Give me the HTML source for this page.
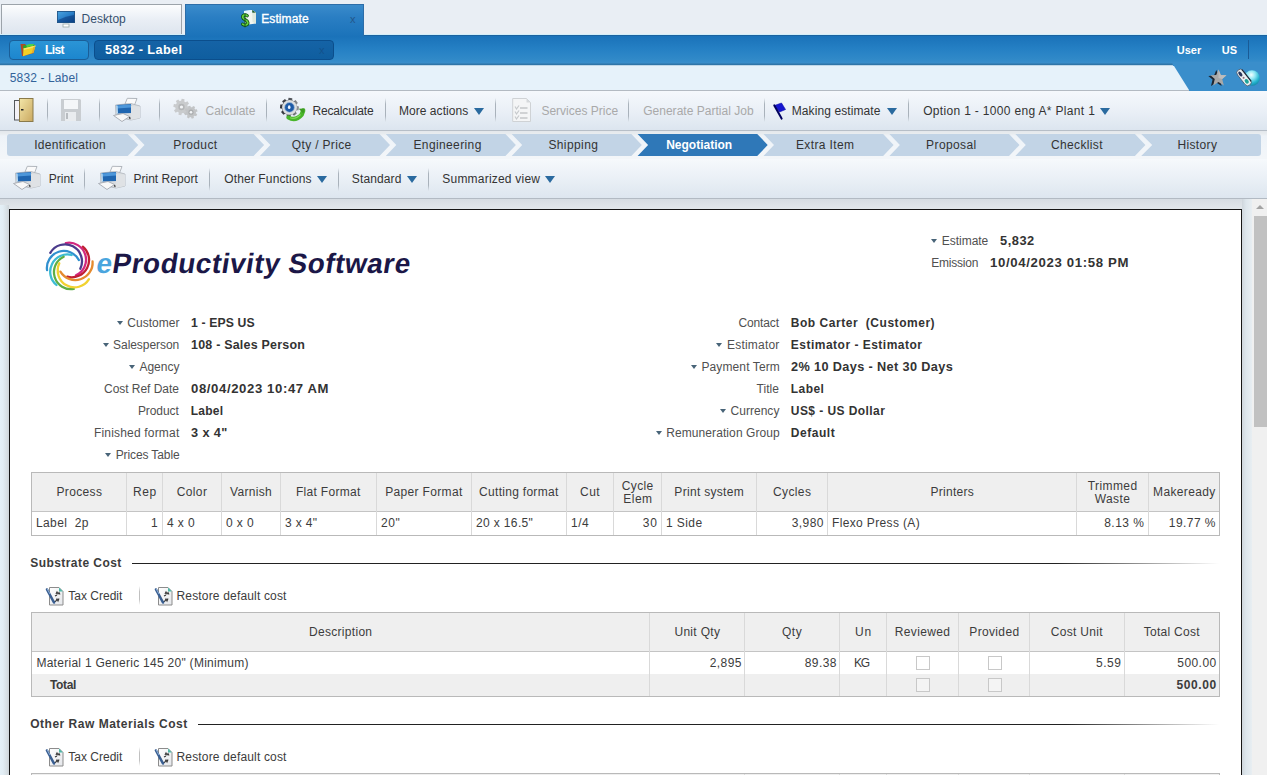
<!DOCTYPE html>
<html><head><meta charset="utf-8"><style>
*{margin:0;padding:0;box-sizing:border-box}
html,body{width:1267px;height:775px;overflow:hidden;background:#e6ebf0;font-family:"Liberation Sans",sans-serif;font-size:12px;color:#333}
.a{position:absolute}
.t{position:absolute;white-space:pre;line-height:14px}
.b{font-weight:bold}
.w{color:#fff}
.g{color:#a8a8a8}
.lb{color:#444}
.vb{color:#333;font-weight:bold}
.sep{position:absolute;width:1px;background:#b3bcc6}
.tri{position:absolute;width:0;height:0;border-left:5.5px solid transparent;border-right:5.5px solid transparent;border-top:7px solid #2a6a9f}
.dt{position:absolute;width:0;height:0;border-left:3px solid transparent;border-right:3px solid transparent;border-top:4px solid #486478}
svg{position:absolute;overflow:visible}

</style></head><body>
<div class="a" style="left:0px;top:0px;width:1267px;height:35px;background:#e9eef4"></div>
<div class="a" style="left:1px;top:4px;width:181px;height:31px;border:1px solid #9ca3aa;border-bottom:none;background:linear-gradient(#fcfdfe,#e9eef5 50%,#dde5ee)"></div>
<div class="a" style="left:0px;top:34px;width:1267px;height:1px;background:#d2eef9"></div>
<svg style="left:57px;top:11px" width="19" height="17" viewBox="0 0 19 17">
<defs><linearGradient id="mon" x1="0" y1="0" x2="1" y2="1"><stop offset="0" stop-color="#4aa3df"/><stop offset=".5" stop-color="#2a7fc8"/><stop offset="1" stop-color="#08478f"/></linearGradient></defs>
<rect x="0" y="0" width="18" height="12" fill="#1f4f80"/><rect x=".8" y=".8" width="16.4" height="10.4" fill="url(#mon)"/>
<path d="M1 9 Q9 5 17 4 L17 11 L1 11Z" fill="#0d3d80" opacity=".6"/>
<rect x="6" y="13" width="6" height="3" fill="#fff" stroke="#9aa" stroke-width=".8"/></svg>
<div class="t " style="top:12px;left:81.60px;letter-spacing:0.03px;color:#35506e;">Desktop</div>
<div class="a" style="left:0px;top:35px;width:1267px;height:31px;background:linear-gradient(#1a62a0 0px,#1a62a0 1px,#1a72b9 1px,#2580c4 14px,#3089c8 24px,#3a8ecb 28px,#2f75a8 29px,#2f75a8 30px,#bfd7e8 30px)"></div>
<div class="a" style="left:185px;top:4px;width:179px;height:32px;background:linear-gradient(#3a8bcb,#2a7ec3 40%,#1b73ba);border:1px solid #2c6da8;border-bottom:none"></div>
<svg style="left:240px;top:9px" width="17" height="19" viewBox="0 0 17 19">
<path d="M4 2 L12 1 L16 3.5 L16 14.5 L5 16Z" fill="#f2f6f0"/>
<path d="M12 1 L16 3.5 L16 14.5 L12.5 13Z" fill="#dfe8dc"/>
<path d="M11.5 .8 L16 3.6 L12.3 3.8Z" fill="#1c5a2a"/>
<path d="M4 2 L12 1 L12.3 3.5 L4.2 5Z" fill="#e6f6ff"/>
<path d="M7.2 6.8 C5.2 5.2 2.2 6 2.8 8.6 C3.4 10.8 7.4 10.8 7.8 13.4 C8.2 16.2 4.6 16.8 2.6 15.2" stroke="#0f4f12" stroke-width="3.3" fill="none" stroke-linecap="round"/>
<path d="M7.2 6.8 C5.2 5.2 2.2 6 2.8 8.6 C3.4 10.8 7.4 10.8 7.8 13.4 C8.2 16.2 4.6 16.8 2.6 15.2" stroke="#66d23c" stroke-width="1.7" fill="none" stroke-linecap="round"/>
<path d="M5 4.5 L5 18.3" stroke="#0f4f12" stroke-width="1"/></svg>
<div class="t w" style="top:12px;left:261.20px;letter-spacing:0.10px;-webkit-text-stroke:.35px #fff">Estimate</div>
<div class="t " style="top:12px;left:350.00px;font-size:11px;color:#23578a;">x</div>
<div class="a" style="left:9px;top:40px;width:80px;height:20px;border-radius:4px;border:1px solid #1a5e98;background:linear-gradient(#2b95d6,#1c86ce)"></div>
<svg style="left:20px;top:43px" width="17" height="14" viewBox="0 0 17 14">
<path d="M.5 1 L5 1 L6 2 L14.5 2 L14 10 L3.5 13 L2 13 Z" fill="#b04a26"/>
<path d="M3 2.5 L8 2 L10 1.5 L14.5 1.5 L14 9 L4 12Z" fill="#2aa62a"/><path d="M6 2 L10 1 L14 1 L13 3 L7 4Z" fill="#4cd24a"/>
<path d="M3.5 5.5 L15.5 2.5 L13.5 9.8 L3 13.2Z" fill="#f3cf25"/>
<path d="M3.5 5.5 L15.5 2.5 L15.2 4 L4 7Z" fill="#f8e46a"/><path d="M13.5 4 L15.3 3.2 L13.5 9.8 L11.5 10.5Z" fill="#e9a92a"/></svg>
<div class="t w" style="top:43px;left:45.00px;font-weight:bold;letter-spacing:-0.60px;">List</div>
<div class="a" style="left:94px;top:40px;width:240px;height:20px;border-radius:4px;border:1px solid #0b4e8c;background:linear-gradient(#1563a6,#0f5e9f)"></div>
<div class="t w" style="top:43px;left:105.00px;font-weight:bold;transform:scaleX(1.060);transform-origin:0.00px 0;letter-spacing:0.36px;">5832 - Label</div>
<div class="t " style="top:43px;left:319.00px;font-size:11px;color:#12528c;">x</div>
<div class="t w" style="top:43px;left:1176.80px;font-weight:bold;font-size:11px;letter-spacing:-0.03px;">User</div>
<div class="t w" style="top:43px;left:1221.80px;font-weight:bold;font-size:11px;">US</div>
<div class="a" style="left:1248px;top:40px;width:1px;height:19px;background:#1a5b96"></div>
<svg style="left:0;top:62px" width="1267" height="29"><path d="M1172 0 L1267 0 L1267 29 L1180 29Z" fill="#3a8ecb"/><path d="M0 4 L1174 4 L1189 28 L0 28Z" fill="#e6f2fa"/><path d="M0 28.5 L1189 28.5" stroke="#b3bac2" stroke-width="1"/></svg>
<div class="t " style="top:71px;left:9.80px;letter-spacing:0.12px;color:#32639a;">5832 - Label</div>
<svg style="left:1208px;top:68px" width="19" height="20" viewBox="0 0 19 20">
<path d="M9.5 1.5 L11.8 7 L17.5 7.3 L13.2 11 L14.8 17.5 L9.5 14 L4.2 17.5 L5.8 11 L1.5 7.3 L7.2 7Z" fill="#1d2530" transform="translate(-1.2,.6)"/>
<path d="M10.5 1.5 L12.8 7 L18.5 7.3 L14.2 11 L15.8 17.5 L10.5 14 L5.2 17.5 L6.8 11 L2.5 7.3 L8.2 7Z" fill="#a9a9a9"/>
<path d="M10.5 1.5 L12.8 7 L18.5 7.3 L14.2 11 L10.5 10Z" fill="#bdbdbd"/></svg>
<svg style="left:1234px;top:67px" width="28" height="21" viewBox="0 0 28 21">
<defs><radialGradient id="gl" cx=".45" cy=".3" r=".75"><stop offset="0" stop-color="#f2ffff"/><stop offset=".35" stop-color="#8fe6f3"/><stop offset=".7" stop-color="#23b3cf"/><stop offset="1" stop-color="#137f9c"/></radialGradient></defs>
<circle cx="18" cy="11" r="7.8" fill="url(#gl)"/>
<g transform="rotate(-38 10 10.5)"><rect x="6.5" y="1" width="7" height="19" rx="3.5" fill="#e9eff2" stroke="#3a4a60" stroke-width=".7"/>
<ellipse cx="9.3" cy="5.5" rx="1.5" ry="2.8" fill="#27345a"/><circle cx="9.5" cy="10.5" r="1" fill="#8a6a7a"/><ellipse cx="9.8" cy="15.2" rx="1.8" ry="2.5" fill="#1fa59a"/>
<path d="M13.3 3 L13.3 18" stroke="#1e2838" stroke-width="1.1"/></g></svg>
<div class="a" style="left:0px;top:91px;width:1267px;height:40px;background:linear-gradient(#f5f8fc,#e9eff6 55%,#dce5ef);border-bottom:1px solid #b6bec7"></div>
<div class="a" style="left:47px;top:98px;width:1px;height:24px;background:linear-gradient(rgba(160,170,180,0),#a9b2bb 25%,#a9b2bb 75%,rgba(160,170,180,0))"></div>
<div class="a" style="left:99px;top:98px;width:1px;height:24px;background:linear-gradient(rgba(160,170,180,0),#a9b2bb 25%,#a9b2bb 75%,rgba(160,170,180,0))"></div>
<div class="a" style="left:159px;top:98px;width:1px;height:24px;background:linear-gradient(rgba(160,170,180,0),#a9b2bb 25%,#a9b2bb 75%,rgba(160,170,180,0))"></div>
<div class="a" style="left:266px;top:98px;width:1px;height:24px;background:linear-gradient(rgba(160,170,180,0),#a9b2bb 25%,#a9b2bb 75%,rgba(160,170,180,0))"></div>
<div class="a" style="left:385px;top:98px;width:1px;height:24px;background:linear-gradient(rgba(160,170,180,0),#a9b2bb 25%,#a9b2bb 75%,rgba(160,170,180,0))"></div>
<div class="a" style="left:495px;top:98px;width:1px;height:24px;background:linear-gradient(rgba(160,170,180,0),#a9b2bb 25%,#a9b2bb 75%,rgba(160,170,180,0))"></div>
<div class="a" style="left:628px;top:98px;width:1px;height:24px;background:linear-gradient(rgba(160,170,180,0),#a9b2bb 25%,#a9b2bb 75%,rgba(160,170,180,0))"></div>
<div class="a" style="left:764px;top:98px;width:1px;height:24px;background:linear-gradient(rgba(160,170,180,0),#a9b2bb 25%,#a9b2bb 75%,rgba(160,170,180,0))"></div>
<div class="a" style="left:908px;top:98px;width:1px;height:24px;background:linear-gradient(rgba(160,170,180,0),#a9b2bb 25%,#a9b2bb 75%,rgba(160,170,180,0))"></div>
<svg style="left:14px;top:98px" width="20" height="24" viewBox="0 0 20 24">
<rect x=".5" y="2.5" width="5.5" height="19.5" fill="#f3f1f6" stroke="#54585c" stroke-width="1"/>
<defs><linearGradient id="dr" x1="0" y1="0" x2="1" y2="1"><stop offset="0" stop-color="#f3e6a8"/><stop offset="1" stop-color="#caa860"/></linearGradient></defs>
<rect x="5.5" y=".5" width="13.5" height="23" fill="url(#dr)" stroke="#8a7a4a" stroke-width="1"/>
<rect x="7" y="11" width="2.5" height="1.5" fill="#222"/></svg>
<svg style="left:60px;top:98px" width="22" height="24" viewBox="0 0 22 24">
<path d="M1 1 L20 1 L21 2 L21 23 L1 23Z" fill="#c9cdd1"/>
<rect x="4" y="2" width="14" height="9" fill="#f4f6f8"/>
<rect x="5" y="14" width="11" height="9" fill="#e9ecef"/><rect x="6" y="15" width="2" height="6" fill="#b8bcc0"/></svg>
<svg style="left:113px;top:98px" width="28" height="25" viewBox="0 0 28 25">
<path d="M14.3 .3 L24 .5 L21.5 7 L12 6Z" fill="#fafafa" stroke="#a9afb5" stroke-width=".9"/>
<path d="M2.5 7 L18 5.5 L27 8 L27 20 L18 22 L3 19Z" fill="#d9dcdf" stroke="#a8aeb4" stroke-width=".7"/>
<path d="M3.5 7 L18 6 L18.5 15 L4 15.5Z" fill="#2066b0"/>
<path d="M3.5 7.5 L18 6.5 L18.2 9.5 L3.8 10.5Z" fill="#4d97da"/>
<path d="M3.2 7.5 L4.5 7.5 L5 15.5 L3.8 15.5Z" fill="#bfe0f6"/>
<path d="M18 8 L27 8.5 L27 20 L18 22Z" fill="#dfe2e5"/>
<path d="M.5 17.5 L10 15.5 L16.5 18.5 L9 23.5Z" fill="#f8f8f8" stroke="#9aa0a8" stroke-width=".8"/>
<path d="M16 19 L17.5 19.5 L17.5 21 L16 20.5Z" fill="#333"/></svg>
<svg style="left:172px;top:98px" width="27" height="24" viewBox="0 0 27 24">
<path d="M15.69 8.61 L17.70 9.19 L17.13 12.02 L15.05 11.77 L14.15 13.10 L15.16 14.93 L12.76 16.52 L11.46 14.88 L9.89 15.19 L9.31 17.20 L6.48 16.63 L6.73 14.55 L5.40 13.65 L3.57 14.66 L1.98 12.26 L3.62 10.96 L3.31 9.39 L1.30 8.81 L1.87 5.98 L3.95 6.23 L4.85 4.90 L3.84 3.07 L6.24 1.48 L7.54 3.12 L9.11 2.81 L9.69 0.80 L12.52 1.37 L12.27 3.45 L13.60 4.35 L15.43 3.34 L17.02 5.74 L15.38 7.04Z" fill="#c9cbcd"/><circle cx="9.5" cy="9" r="3.2" fill="#b4b6b8"/><circle cx="9.5" cy="9" r="1.6" fill="#f2f4f6"/>
<path d="M23.86 15.37 L25.26 16.30 L24.15 18.33 L22.61 17.66 L21.61 18.47 L21.94 20.11 L19.72 20.76 L19.11 19.20 L17.83 19.06 L16.90 20.46 L14.87 19.35 L15.54 17.81 L14.73 16.81 L13.09 17.14 L12.44 14.92 L14.00 14.31 L14.14 13.03 L12.74 12.10 L13.85 10.07 L15.39 10.74 L16.39 9.93 L16.06 8.29 L18.28 7.64 L18.89 9.20 L20.17 9.34 L21.10 7.94 L23.13 9.05 L22.46 10.59 L23.27 11.59 L24.91 11.26 L25.56 13.48 L24.00 14.09Z" fill="#c2c4c6"/><circle cx="19" cy="14.2" r="2.6" fill="#acaeb0"/><circle cx="19" cy="14.2" r="1.3" fill="#f2f4f6"/></svg>
<div class="t " style="top:104px;left:205.60px;letter-spacing:-0.04px;color:#a9a9a9;">Calculate</div>
<svg style="left:276px;top:95px" width="32" height="30" viewBox="0 0 32 30">
<defs><linearGradient id="rgt" x1="0" y1="0" x2="1" y2="0"><stop offset="0" stop-color="#2e3038"/><stop offset=".6" stop-color="#55585e"/><stop offset="1" stop-color="#9a9ca0"/></linearGradient></defs>
<path d="M20.98 11.08 L23.06 11.48 L22.68 15.20 L20.57 15.18 L19.73 16.76 L20.91 18.50 L18.01 20.87 L16.53 19.37 L14.82 19.88 L14.42 21.96 L10.70 21.58 L10.72 19.47 L9.14 18.63 L7.40 19.81 L5.03 16.91 L6.53 15.43 L6.02 13.72 L3.94 13.32 L4.32 9.60 L6.43 9.62 L7.27 8.04 L6.09 6.30 L8.99 3.93 L10.47 5.43 L12.18 4.92 L12.58 2.84 L16.30 3.22 L16.28 5.33 L17.86 6.17 L19.60 4.99 L21.97 7.89 L20.47 9.37Z" fill="url(#rgt)"/><circle cx="13.5" cy="12.4" r="7.4" fill="#dcdedf"/>
<circle cx="13.5" cy="12.4" r="4.9" fill="#1d5aa6" stroke="#a8c0dc" stroke-width=".7"/><ellipse cx="13.2" cy="12.2" rx="1.3" ry="1.9" fill="#f0f6ff"/>
<path d="M12.5 22.5 Q19.5 26.8 25.8 19.5 L27.2 15.5" stroke="#48b52a" stroke-width="4.4" fill="none" stroke-linecap="round"/>
<path d="M14 22.8 Q19.5 25 24.5 19.5" stroke="#7fd85a" stroke-width="1.2" fill="none"/>
<path d="M22.8 13.8 L28.8 13.6 L27.4 18.8Z" fill="#3d9c22"/></svg>
<div class="t " style="top:104px;left:312.40px;letter-spacing:-0.15px;">Recalculate</div>
<div class="t " style="top:104px;left:398.90px;letter-spacing:0.06px;">More actions</div>
<div class="tri" style="left:474px;top:108px"></div>
<svg style="left:512px;top:98px" width="20" height="25" viewBox="0 0 20 25">
<path d="M.7 .5 L14.5 .5 L18.5 4.5 L18.5 23.5 L.7 23.5Z" fill="#f4f5f6" stroke="#cfd2d5" stroke-width="1"/>
<path d="M14.5 .5 L18.5 4.5 L14.5 4.5Z" fill="#d6d9dc"/>
<g stroke="#c3c6c9" stroke-width="1.4"><path d="M8 10 H15.5 M8 15 H15.5 M8 20 H15.5"/></g>
<g stroke="#c6c9cc" stroke-width="1.2" fill="none"><path d="M3 8.5 L4.5 11 L7 7.5 M3 13.5 L4.5 16 L7 12.5 M3 18.5 L4.5 21 L7 17.5"/></g></svg>
<div class="t " style="top:104px;left:541.40px;color:#a9a9a9;">Services Price</div>
<div class="t " style="top:104px;left:643.20px;letter-spacing:0.02px;color:#a9a9a9;">Generate Partial Job</div>
<svg style="left:772px;top:102px" width="16" height="18" viewBox="0 0 16 18">
<path d="M2.5 3.5 L9.5 1 L13.5 7.5 L7.5 10Z" fill="#1616d0" stroke="#0c0ca8" stroke-width=".6"/>
<path d="M2.3 3.4 L9.6 16.6" stroke="#00005e" stroke-width="2" stroke-linecap="round"/></svg>
<div class="t " style="top:104px;left:791.70px;letter-spacing:0.10px;">Making estimate</div>
<div class="tri" style="left:887px;top:108px"></div>
<div class="t " style="top:104px;left:923.20px;letter-spacing:0.33px;">Option 1 - 1000 eng A* Plant 1</div>
<div class="tri" style="left:1100px;top:108px"></div>
<div class="a" style="left:0px;top:131px;width:1267px;height:28px;background:linear-gradient(#e3e7eb,#e9edf0 3px,#eef3f8 5px,#f1f5f9 60%,#f3f6f9)"></div>
<svg style="left:0;top:134px" width="1267" height="22"><path d="M10 0 L127.7 0 L138.2 11 L127.7 22 L10 22 Q7 22 7 19 L7 3 Q7 0 10 0Z" fill="#c2d4e6"/><path d="M134.0 0 L253.6 0 L264.1 11 L253.6 22 L134.0 22 L144.5 11Z" fill="#c2d4e6"/><path d="M259.9 0 L379.5 0 L390.0 11 L379.5 22 L259.9 22 L270.4 11Z" fill="#c2d4e6"/><path d="M385.8 0 L505.4 0 L515.9 11 L505.4 22 L385.8 22 L396.3 11Z" fill="#c2d4e6"/><path d="M511.7 0 L631.3 0 L641.8 11 L631.3 22 L511.7 22 L522.2 11Z" fill="#c2d4e6"/><path d="M637.6 0 L757.2 0 L767.7 11 L757.2 22 L637.6 22 L648.1 11Z" fill="#2f78b8"/><path d="M763.5 0 L883.1 0 L893.6 11 L883.1 22 L763.5 22 L774.0 11Z" fill="#c2d4e6"/><path d="M889.4 0 L1009.0 0 L1019.5 11 L1009.0 22 L889.4 22 L899.9 11Z" fill="#c2d4e6"/><path d="M1015.3 0 L1134.9 0 L1145.4 11 L1134.9 22 L1015.3 22 L1025.8 11Z" fill="#c2d4e6"/><path d="M1141.2 0 L1258 0 Q1261 0 1261 3 L1261 19 Q1261 22 1258 22 L1141.2 22 L1152.2 11Z" fill="#c2d4e6"/></svg>
<div class="t " style="top:138px;left:34.19px;letter-spacing:0.31px;color:#333;">Identification</div>
<div class="t " style="top:138px;left:173.34px;letter-spacing:0.42px;color:#333;">Product</div>
<div class="t " style="top:138px;left:291.82px;letter-spacing:0.34px;color:#333;">Qty / Price</div>
<div class="t " style="top:138px;left:413.48px;letter-spacing:0.38px;color:#333;">Engineering</div>
<div class="t " style="top:138px;left:548.39px;letter-spacing:0.40px;color:#333;">Shipping</div>
<div class="t " style="top:138px;left:666.20px;font-weight:bold;color:#fff;">Negotiation</div>
<div class="t " style="top:138px;left:795.95px;letter-spacing:0.37px;color:#333;">Extra Item</div>
<div class="t " style="top:138px;left:926.09px;letter-spacing:0.40px;color:#333;">Proposal</div>
<div class="t " style="top:138px;left:1050.93px;letter-spacing:0.37px;color:#333;">Checklist</div>
<div class="t " style="top:138px;left:1177.39px;letter-spacing:0.37px;color:#333;">History</div>
<div class="a" style="left:0px;top:159px;width:1267px;height:40px;background:linear-gradient(#f6f9fc,#eaf0f6 50%,#dde6ef);border-bottom:1px solid #b2bac3"></div>
<div class="a" style="left:84px;top:168px;width:1px;height:23px;background:linear-gradient(rgba(160,170,180,0),#a9b2bb 25%,#a9b2bb 75%,rgba(160,170,180,0))"></div>
<div class="a" style="left:209px;top:168px;width:1px;height:23px;background:linear-gradient(rgba(160,170,180,0),#a9b2bb 25%,#a9b2bb 75%,rgba(160,170,180,0))"></div>
<div class="a" style="left:338px;top:168px;width:1px;height:23px;background:linear-gradient(rgba(160,170,180,0),#a9b2bb 25%,#a9b2bb 75%,rgba(160,170,180,0))"></div>
<div class="a" style="left:428px;top:168px;width:1px;height:23px;background:linear-gradient(rgba(160,170,180,0),#a9b2bb 25%,#a9b2bb 75%,rgba(160,170,180,0))"></div>
<svg style="left:13px;top:166px" width="28" height="25" viewBox="0 0 28 25">
<path d="M14.3 .3 L24 .5 L21.5 7 L12 6Z" fill="#fafafa" stroke="#a9afb5" stroke-width=".9"/>
<path d="M2.5 7 L18 5.5 L27 8 L27 20 L18 22 L3 19Z" fill="#d9dcdf" stroke="#a8aeb4" stroke-width=".7"/>
<path d="M3.5 7 L18 6 L18.5 15 L4 15.5Z" fill="#2066b0"/>
<path d="M3.5 7.5 L18 6.5 L18.2 9.5 L3.8 10.5Z" fill="#4d97da"/>
<path d="M3.2 7.5 L4.5 7.5 L5 15.5 L3.8 15.5Z" fill="#bfe0f6"/>
<path d="M18 8 L27 8.5 L27 20 L18 22Z" fill="#dfe2e5"/>
<path d="M.5 17.5 L10 15.5 L16.5 18.5 L9 23.5Z" fill="#f8f8f8" stroke="#9aa0a8" stroke-width=".8"/>
<path d="M16 19 L17.5 19.5 L17.5 21 L16 20.5Z" fill="#333"/></svg>
<div class="t " style="top:172px;left:48.80px;letter-spacing:0.03px;">Print</div>
<svg style="left:98px;top:166px" width="28" height="25" viewBox="0 0 28 25">
<path d="M14.3 .3 L24 .5 L21.5 7 L12 6Z" fill="#fafafa" stroke="#a9afb5" stroke-width=".9"/>
<path d="M2.5 7 L18 5.5 L27 8 L27 20 L18 22 L3 19Z" fill="#d9dcdf" stroke="#a8aeb4" stroke-width=".7"/>
<path d="M3.5 7 L18 6 L18.5 15 L4 15.5Z" fill="#2066b0"/>
<path d="M3.5 7.5 L18 6.5 L18.2 9.5 L3.8 10.5Z" fill="#4d97da"/>
<path d="M3.2 7.5 L4.5 7.5 L5 15.5 L3.8 15.5Z" fill="#bfe0f6"/>
<path d="M18 8 L27 8.5 L27 20 L18 22Z" fill="#dfe2e5"/>
<path d="M.5 17.5 L10 15.5 L16.5 18.5 L9 23.5Z" fill="#f8f8f8" stroke="#9aa0a8" stroke-width=".8"/>
<path d="M16 19 L17.5 19.5 L17.5 21 L16 20.5Z" fill="#333"/></svg>
<div class="t " style="top:172px;left:133.40px;letter-spacing:0.03px;">Print Report</div>
<div class="t " style="top:172px;left:224.20px;letter-spacing:0.14px;">Other Functions</div>
<div class="tri" style="left:317px;top:176px"></div>
<div class="t " style="top:172px;left:351.80px;letter-spacing:0.13px;">Standard</div>
<div class="tri" style="left:407px;top:176px"></div>
<div class="t " style="top:172px;left:442.30px;letter-spacing:0.21px;">Summarized view</div>
<div class="tri" style="left:545px;top:176px"></div>
<div class="a" style="left:0px;top:199px;width:1252px;height:576px;background:linear-gradient(#d6dce2,#e2e7eb 10px,#e4e9ed)"></div>
<div class="a" style="left:0px;top:205px;width:9px;height:570px;background:linear-gradient(90deg,#e4f0f7 0,#e2edf4 3px,#d6dee3 7px,#cdd4d9 9px)"></div>
<div class="a" style="left:1242px;top:199px;width:10px;height:576px;background:linear-gradient(90deg,#cfd6dc,#dde6ec 4px,#e8eef2)"></div>
<div class="a" style="left:1252px;top:199px;width:15px;height:576px;background:#f0f0f0"></div>
<div class="a" style="left:1256px;top:205px;width:0;height:0;border-left:4px solid transparent;border-right:4px solid transparent;border-bottom:4px solid #a3a3a3"></div>
<div class="a" style="left:1254px;top:216px;width:13px;height:211px;background:#c1c1c1"></div>
<div class="a" style="left:9px;top:209px;width:1233px;height:600px;background:#fff;border:1px solid #161616"></div>
<svg style="left:42px;top:238px" width="56" height="56" viewBox="0 0 56 56"><path d="M23.84 5.06 A16.96 16.96 0 0 1 33.96 37.21" stroke="#d2287f" stroke-width="2.3" fill="none" stroke-linecap="round"/><path d="M40.82 8.67 A17.28 17.28 0 0 1 25.29 38.66" stroke="#c11f33" stroke-width="2.3" fill="none" stroke-linecap="round"/><path d="M8.31 14.81 A16.98 16.98 0 0 1 38.29 30.71" stroke="#4b3b8c" stroke-width="2.3" fill="none" stroke-linecap="round"/><path d="M5.06 32.15 A16.93 16.93 0 0 1 36.85 22.04" stroke="#3190cf" stroke-width="2.3" fill="none" stroke-linecap="round"/><path d="M14.45 46.97 A17.23 17.23 0 0 1 29.62 16.98" stroke="#3dbcd3" stroke-width="2.3" fill="none" stroke-linecap="round"/><path d="M31.79 50.94 A17.01 17.01 0 0 1 21.68 18.79" stroke="#5eae45" stroke-width="2.3" fill="none" stroke-linecap="round"/><path d="M46.97 41.18 A16.83 16.83 0 0 1 17.34 25.29" stroke="#f1d230" stroke-width="2.3" fill="none" stroke-linecap="round"/><path d="M50.58 23.48 A17.33 17.33 0 0 1 18.42 33.60" stroke="#e58a2e" stroke-width="2.3" fill="none" stroke-linecap="round"/></svg>
<div class="t" style="left:95px;top:248px;font-size:28px;line-height:32px;font-weight:bold;color:#1b1747;letter-spacing:.5px;transform:skewX(-9deg);transform-origin:0 26px"><span style="color:#4aa5de">e</span>Productivity Software</div>
<div class="dt" style="left:931px;top:239px"></div>
<div class="t " style="top:234px;left:941.80px;letter-spacing:-0.03px;color:#505050;">Estimate</div>
<div class="t " style="top:234px;left:999.50px;font-weight:bold;transform:scaleX(1.070);transform-origin:0.00px 0;letter-spacing:0.49px;color:#333;">5,832</div>
<div class="t " style="top:256px;left:931.30px;letter-spacing:-0.23px;color:#505050;">Emission</div>
<div class="t " style="top:256px;left:990.30px;font-weight:bold;transform:scaleX(1.100);transform-origin:0.00px 0;letter-spacing:0.58px;color:#333;">10/04/2023 01:58 PM</div>
<div class="t " style="top:316px;left:127.30px;letter-spacing:0.03px;color:#505050;">Customer</div>
<div class="dt" style="left:117px;top:321px"></div>
<div class="t " style="top:316px;left:190.80px;font-weight:bold;transform:scaleX(1.018);transform-origin:0.00px 0;letter-spacing:0.12px;color:#333;">1 - EPS US</div>
<div class="t " style="top:338px;left:113.10px;letter-spacing:-0.06px;color:#505050;">Salesperson</div>
<div class="dt" style="left:103px;top:343px"></div>
<div class="t " style="top:338px;left:190.80px;font-weight:bold;transform:scaleX(1.037);transform-origin:0.00px 0;letter-spacing:0.22px;color:#333;">108 - Sales Person</div>
<div class="t " style="top:360px;left:139.40px;letter-spacing:0.02px;color:#505050;">Agency</div>
<div class="dt" style="left:129px;top:365px"></div>
<div class="t " style="top:382px;left:104.00px;letter-spacing:-0.04px;color:#505050;">Cost Ref Date</div>
<div class="t " style="top:382px;left:190.80px;font-weight:bold;transform:scaleX(1.094);transform-origin:0.00px 0;letter-spacing:0.56px;color:#333;">08/04/2023 10:47 AM</div>
<div class="t " style="top:404px;left:137.90px;letter-spacing:-0.07px;color:#505050;">Product</div>
<div class="t " style="top:404px;left:190.80px;font-weight:bold;letter-spacing:0.22px;color:#333;">Label</div>
<div class="t " style="top:426px;left:93.90px;letter-spacing:0.19px;color:#505050;">Finished format</div>
<div class="t " style="top:426px;left:190.80px;font-weight:bold;transform:scaleX(1.062);transform-origin:0.00px 0;letter-spacing:0.38px;color:#333;">3 x 4&quot;</div>
<div class="t " style="top:448px;left:115.70px;letter-spacing:-0.11px;color:#505050;">Prices Table</div>
<div class="dt" style="left:105px;top:453px"></div>
<div class="t " style="top:316px;left:738.50px;letter-spacing:-0.13px;color:#505050;">Contact</div>
<div class="t " style="top:316px;left:790.80px;font-weight:bold;letter-spacing:0.53px;color:#333;">Bob Carter  (Customer)</div>
<div class="t " style="top:338px;left:727.00px;letter-spacing:0.21px;color:#505050;">Estimator</div>
<div class="dt" style="left:716px;top:343px"></div>
<div class="t " style="top:338px;left:790.80px;font-weight:bold;letter-spacing:0.49px;color:#333;">Estimator - Estimator</div>
<div class="t " style="top:360px;left:701.40px;letter-spacing:0.12px;color:#505050;">Payment Term</div>
<div class="dt" style="left:691px;top:365px"></div>
<div class="t " style="top:360px;left:790.80px;font-weight:bold;transform:scaleX(1.059);transform-origin:0.00px 0;letter-spacing:0.35px;color:#333;">2% 10 Days - Net 30 Days</div>
<div class="t " style="top:382px;left:756.60px;letter-spacing:0.03px;color:#505050;">Title</div>
<div class="t " style="top:382px;left:790.80px;font-weight:bold;letter-spacing:0.43px;color:#333;">Label</div>
<div class="t " style="top:404px;left:730.50px;letter-spacing:0.03px;color:#505050;">Currency</div>
<div class="dt" style="left:720px;top:409px"></div>
<div class="t " style="top:404px;left:790.80px;font-weight:bold;letter-spacing:0.43px;color:#333;">US$ - US Dollar</div>
<div class="t " style="top:426px;left:666.20px;letter-spacing:0.09px;color:#505050;">Remuneration Group</div>
<div class="dt" style="left:656px;top:431px"></div>
<div class="t " style="top:426px;left:790.80px;font-weight:bold;letter-spacing:0.53px;color:#333;">Default</div>
<div class="a" style="left:31px;top:472px;width:1189px;height:64px;background:#fff;border:1px solid #b9b9b9"></div>
<div class="a" style="left:32px;top:473px;width:1187px;height:38px;background:#efefef"></div>
<div class="a" style="left:32px;top:511px;width:1187px;height:1px;background:#c4c4c4"></div>
<div class="a" style="left:126px;top:473px;width:1px;height:62px;background:#d9d9d9"></div>
<div class="a" style="left:162px;top:473px;width:1px;height:62px;background:#d9d9d9"></div>
<div class="a" style="left:221px;top:473px;width:1px;height:62px;background:#d9d9d9"></div>
<div class="a" style="left:280px;top:473px;width:1px;height:62px;background:#d9d9d9"></div>
<div class="a" style="left:376px;top:473px;width:1px;height:62px;background:#d9d9d9"></div>
<div class="a" style="left:471px;top:473px;width:1px;height:62px;background:#d9d9d9"></div>
<div class="a" style="left:566px;top:473px;width:1px;height:62px;background:#d9d9d9"></div>
<div class="a" style="left:613px;top:473px;width:1px;height:62px;background:#d9d9d9"></div>
<div class="a" style="left:661px;top:473px;width:1px;height:62px;background:#d9d9d9"></div>
<div class="a" style="left:756px;top:473px;width:1px;height:62px;background:#d9d9d9"></div>
<div class="a" style="left:827px;top:473px;width:1px;height:62px;background:#d9d9d9"></div>
<div class="a" style="left:1076px;top:473px;width:1px;height:62px;background:#d9d9d9"></div>
<div class="a" style="left:1148px;top:473px;width:1px;height:62px;background:#d9d9d9"></div>
<div class="t " style="top:485px;left:56.42px;letter-spacing:0.36px;color:#3c3c3c;">Process</div>
<div class="t " style="top:485px;left:132.95px;letter-spacing:0.55px;color:#3c3c3c;">Rep</div>
<div class="t " style="top:485px;left:176.78px;letter-spacing:0.36px;color:#3c3c3c;">Color</div>
<div class="t " style="top:485px;left:230.00px;letter-spacing:0.33px;color:#3c3c3c;">Varnish</div>
<div class="t " style="top:485px;left:295.95px;letter-spacing:0.31px;color:#3c3c3c;">Flat Format</div>
<div class="t " style="top:485px;left:385.15px;letter-spacing:0.34px;color:#3c3c3c;">Paper Format</div>
<div class="t " style="top:485px;left:479.10px;letter-spacing:0.29px;color:#3c3c3c;">Cutting format</div>
<div class="t " style="top:485px;left:580.02px;letter-spacing:0.48px;color:#3c3c3c;">Cut</div>
<div class="t " style="top:479px;left:621.75px;letter-spacing:0.38px;color:#3c3c3c;">Cycle</div>
<div class="t " style="top:492px;left:623.33px;letter-spacing:0.45px;color:#3c3c3c;">Elem</div>
<div class="t " style="top:485px;left:674.35px;letter-spacing:0.30px;color:#3c3c3c;">Print system</div>
<div class="t " style="top:485px;left:773.10px;letter-spacing:0.36px;color:#3c3c3c;">Cycles</div>
<div class="t " style="top:485px;left:930.48px;letter-spacing:0.29px;color:#3c3c3c;">Printers</div>
<div class="t " style="top:479px;left:1087.83px;letter-spacing:0.39px;color:#3c3c3c;">Trimmed</div>
<div class="t " style="top:492px;left:1094.65px;letter-spacing:0.42px;color:#3c3c3c;">Waste</div>
<div class="t " style="top:485px;left:1153.03px;letter-spacing:0.37px;color:#3c3c3c;">Makeready</div>
<div class="t " style="top:516px;left:36.00px;letter-spacing:0.38px;color:#3c3c3c;">Label  2p</div>
<div class="t " style="top:516px;left:151.08px;color:#3c3c3c;">1</div>
<div class="t " style="top:516px;left:167.00px;letter-spacing:0.39px;color:#3c3c3c;">4 x 0</div>
<div class="t " style="top:516px;left:226.00px;letter-spacing:0.39px;color:#3c3c3c;">0 x 0</div>
<div class="t " style="top:516px;left:285.00px;letter-spacing:0.36px;color:#3c3c3c;">3 x 4&quot;</div>
<div class="t " style="top:516px;left:381.00px;letter-spacing:0.54px;color:#3c3c3c;">20&quot;</div>
<div class="t " style="top:516px;left:476.00px;letter-spacing:0.36px;color:#3c3c3c;">20 x 16.5&quot;</div>
<div class="t " style="top:516px;left:571.00px;letter-spacing:0.51px;color:#3c3c3c;">1/4</div>
<div class="t " style="top:516px;left:642.66px;letter-spacing:0.84px;color:#3c3c3c;">30</div>
<div class="t " style="top:516px;left:666.00px;letter-spacing:0.41px;color:#3c3c3c;">1 Side</div>
<div class="t " style="top:516px;left:791.70px;letter-spacing:0.45px;color:#3c3c3c;">3,980</div>
<div class="t " style="top:516px;left:832.00px;letter-spacing:0.36px;color:#3c3c3c;">Flexo Press (A)</div>
<div class="t " style="top:516px;left:1104.22px;letter-spacing:0.46px;color:#3c3c3c;">8.13 %</div>
<div class="t " style="top:516px;left:1168.86px;letter-spacing:0.44px;color:#3c3c3c;">19.77 %</div>
<div class="t " style="top:556px;left:30.20px;font-weight:bold;letter-spacing:0.44px;color:#3c3c3c;">Substrate Cost</div>
<div class="a" style="left:132px;top:563px;width:1087px;height:1px;background:linear-gradient(90deg,#222,#222 85%,rgba(34,34,34,0))"></div>
<svg style="left:45px;top:586px" width="19" height="20" viewBox="0 0 19 20">
<defs><linearGradient id="tcg" x1="0" y1="0" x2="1" y2="1"><stop offset="0" stop-color="#ffffff"/><stop offset="1" stop-color="#e4e6ea"/></linearGradient></defs>
<path d="M4.5 1.5 L14 1.5 L18 5.5 L18 19 L4.5 19Z" fill="url(#tcg)" stroke="#8c8c8c" stroke-width="1"/>
<path d="M14 1.5 L18 5.5 L14 5.5Z" fill="#4fb8a8"/>
<path d="M11 8 l1 -2 l1 2 l1 -1.5 l1 2 M10 10 l2 -1 M11 15 l1 -2 l1 2 l1 -2.5 M9 16 l2 -1" stroke="#333" stroke-width="1.1" fill="none"/>
<path d="M2 3.5 L9 16.5" stroke="#3a5f92" stroke-width="2.6" stroke-linecap="round"/><path d="M2.3 3 L5 8" stroke="#8fb0d8" stroke-width="1"/></svg>
<div class="t " style="top:589px;left:68.30px;color:#3c3c3c;">Tax Credit</div>
<div class="a" style="left:139px;top:586px;width:1px;height:19px;background:linear-gradient(rgba(180,180,180,0),#c0c0c0 30%,#c0c0c0 70%,rgba(180,180,180,0))"></div>
<svg style="left:154px;top:586px" width="19" height="20" viewBox="0 0 19 20">
<defs><linearGradient id="tcg" x1="0" y1="0" x2="1" y2="1"><stop offset="0" stop-color="#ffffff"/><stop offset="1" stop-color="#e4e6ea"/></linearGradient></defs>
<path d="M4.5 1.5 L14 1.5 L18 5.5 L18 19 L4.5 19Z" fill="url(#tcg)" stroke="#8c8c8c" stroke-width="1"/>
<path d="M14 1.5 L18 5.5 L14 5.5Z" fill="#4fb8a8"/>
<path d="M11 8 l1 -2 l1 2 l1 -1.5 l1 2 M10 10 l2 -1 M11 15 l1 -2 l1 2 l1 -2.5 M9 16 l2 -1" stroke="#333" stroke-width="1.1" fill="none"/>
<path d="M2 3.5 L9 16.5" stroke="#3a5f92" stroke-width="2.6" stroke-linecap="round"/><path d="M2.3 3 L5 8" stroke="#8fb0d8" stroke-width="1"/></svg>
<div class="t " style="top:589px;left:176.50px;letter-spacing:0.17px;color:#3c3c3c;">Restore default cost</div>
<div class="a" style="left:31px;top:612px;width:1189px;height:85px;background:#fff;border:1px solid #b9b9b9"></div>
<div class="a" style="left:32px;top:613px;width:1187px;height:38px;background:#efefef"></div>
<div class="a" style="left:32px;top:674px;width:1187px;height:22px;background:#efefef"></div>
<div class="a" style="left:32px;top:651px;width:1187px;height:1px;background:#c4c4c4"></div>
<div class="a" style="left:649px;top:613px;width:1px;height:83px;background:#d9d9d9"></div>
<div class="a" style="left:744px;top:613px;width:1px;height:83px;background:#d9d9d9"></div>
<div class="a" style="left:839px;top:613px;width:1px;height:83px;background:#d9d9d9"></div>
<div class="a" style="left:886px;top:613px;width:1px;height:83px;background:#d9d9d9"></div>
<div class="a" style="left:958px;top:613px;width:1px;height:83px;background:#d9d9d9"></div>
<div class="a" style="left:1029px;top:613px;width:1px;height:83px;background:#d9d9d9"></div>
<div class="a" style="left:1124px;top:613px;width:1px;height:83px;background:#d9d9d9"></div>
<div class="t " style="top:625px;left:309.00px;letter-spacing:0.30px;color:#3c3c3c;">Description</div>
<div class="t " style="top:625px;left:674.42px;letter-spacing:0.31px;color:#3c3c3c;">Unit Qty</div>
<div class="t " style="top:625px;left:782.02px;letter-spacing:0.48px;color:#3c3c3c;">Qty</div>
<div class="t " style="top:625px;left:855.12px;letter-spacing:0.75px;color:#3c3c3c;">Un</div>
<div class="t " style="top:625px;left:894.67px;letter-spacing:0.38px;color:#3c3c3c;">Reviewed</div>
<div class="t " style="top:625px;left:969.33px;letter-spacing:0.34px;color:#3c3c3c;">Provided</div>
<div class="t " style="top:625px;left:1050.75px;letter-spacing:0.31px;color:#3c3c3c;">Cost Unit</div>
<div class="t " style="top:625px;left:1143.65px;letter-spacing:0.30px;color:#3c3c3c;">Total Cost</div>
<div class="t " style="top:656px;left:36.40px;letter-spacing:0.28px;color:#3c3c3c;">Material 1 Generic 145 20&quot; (Minimum)</div>
<div class="t " style="top:656px;left:709.70px;letter-spacing:0.45px;color:#3c3c3c;">2,895</div>
<div class="t " style="top:656px;left:804.70px;letter-spacing:0.45px;color:#3c3c3c;">89.38</div>
<div class="t " style="top:656px;left:1096.06px;letter-spacing:0.48px;color:#3c3c3c;">5.59</div>
<div class="t " style="top:656px;left:1177.28px;letter-spacing:0.44px;color:#3c3c3c;">500.00</div>
<div class="t " style="top:656px;left:854.00px;letter-spacing:-1.30px;color:#3c3c3c;">KG</div>
<div class="t " style="top:678px;left:49.90px;font-weight:bold;letter-spacing:-0.33px;color:#3c3c3c;">Total</div>
<div class="t " style="top:678px;left:1176.54px;font-weight:bold;letter-spacing:0.59px;color:#3c3c3c;">500.00</div>
<div class="a" style="left:916px;top:656px;width:14px;height:14px;background:#fff;border:1px solid #c8c8c8"></div>
<div class="a" style="left:916px;top:678px;width:14px;height:14px;background:#f4f4f4;border:1px solid #c8c8c8"></div>
<div class="a" style="left:988px;top:656px;width:14px;height:14px;background:#fff;border:1px solid #c8c8c8"></div>
<div class="a" style="left:988px;top:678px;width:14px;height:14px;background:#f4f4f4;border:1px solid #c8c8c8"></div>
<div class="t " style="top:717px;left:30.20px;font-weight:bold;letter-spacing:0.51px;color:#3c3c3c;">Other Raw Materials Cost</div>
<div class="a" style="left:198px;top:724px;width:1021px;height:1px;background:linear-gradient(90deg,#222,#222 85%,rgba(34,34,34,0))"></div>
<svg style="left:45px;top:747px" width="19" height="20" viewBox="0 0 19 20">
<defs><linearGradient id="tcg" x1="0" y1="0" x2="1" y2="1"><stop offset="0" stop-color="#ffffff"/><stop offset="1" stop-color="#e4e6ea"/></linearGradient></defs>
<path d="M4.5 1.5 L14 1.5 L18 5.5 L18 19 L4.5 19Z" fill="url(#tcg)" stroke="#8c8c8c" stroke-width="1"/>
<path d="M14 1.5 L18 5.5 L14 5.5Z" fill="#4fb8a8"/>
<path d="M11 8 l1 -2 l1 2 l1 -1.5 l1 2 M10 10 l2 -1 M11 15 l1 -2 l1 2 l1 -2.5 M9 16 l2 -1" stroke="#333" stroke-width="1.1" fill="none"/>
<path d="M2 3.5 L9 16.5" stroke="#3a5f92" stroke-width="2.6" stroke-linecap="round"/><path d="M2.3 3 L5 8" stroke="#8fb0d8" stroke-width="1"/></svg>
<div class="t " style="top:750px;left:68.30px;color:#3c3c3c;">Tax Credit</div>
<div class="a" style="left:139px;top:747px;width:1px;height:19px;background:linear-gradient(rgba(180,180,180,0),#c0c0c0 30%,#c0c0c0 70%,rgba(180,180,180,0))"></div>
<svg style="left:154px;top:747px" width="19" height="20" viewBox="0 0 19 20">
<defs><linearGradient id="tcg" x1="0" y1="0" x2="1" y2="1"><stop offset="0" stop-color="#ffffff"/><stop offset="1" stop-color="#e4e6ea"/></linearGradient></defs>
<path d="M4.5 1.5 L14 1.5 L18 5.5 L18 19 L4.5 19Z" fill="url(#tcg)" stroke="#8c8c8c" stroke-width="1"/>
<path d="M14 1.5 L18 5.5 L14 5.5Z" fill="#4fb8a8"/>
<path d="M11 8 l1 -2 l1 2 l1 -1.5 l1 2 M10 10 l2 -1 M11 15 l1 -2 l1 2 l1 -2.5 M9 16 l2 -1" stroke="#333" stroke-width="1.1" fill="none"/>
<path d="M2 3.5 L9 16.5" stroke="#3a5f92" stroke-width="2.6" stroke-linecap="round"/><path d="M2.3 3 L5 8" stroke="#8fb0d8" stroke-width="1"/></svg>
<div class="t " style="top:750px;left:176.50px;letter-spacing:0.17px;color:#3c3c3c;">Restore default cost</div>
<div class="a" style="left:31px;top:773px;width:1189px;height:68px;background:#fff;border:1px solid #b9b9b9"></div>
<div class="a" style="left:32px;top:774px;width:1187px;height:38px;background:#efefef"></div>
<div class="a" style="left:32px;top:812px;width:1187px;height:1px;background:#c4c4c4"></div>
<div class="a" style="left:744px;top:774px;width:1px;height:66px;background:#d9d9d9"></div>
<div class="a" style="left:839px;top:774px;width:1px;height:66px;background:#d9d9d9"></div>
<div class="a" style="left:886px;top:774px;width:1px;height:66px;background:#d9d9d9"></div>
<div class="a" style="left:958px;top:774px;width:1px;height:66px;background:#d9d9d9"></div>
<div class="a" style="left:1029px;top:774px;width:1px;height:66px;background:#d9d9d9"></div>
<div class="a" style="left:1124px;top:774px;width:1px;height:66px;background:#d9d9d9"></div>
</body></html>
